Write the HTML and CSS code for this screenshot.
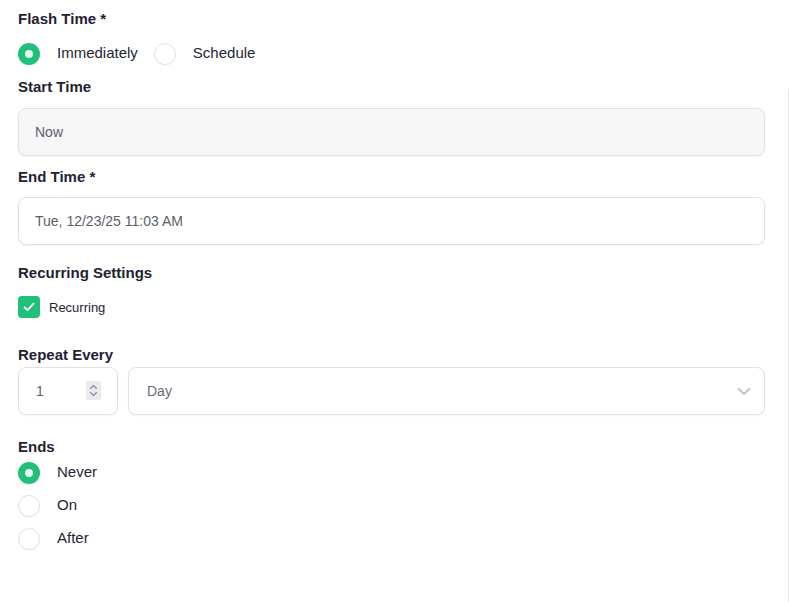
FILE: index.html
```html
<!DOCTYPE html>
<html lang="en">
<head>
<meta charset="utf-8">
<title>Flash Time</title>
<link rel="stylesheet" href="styles.css">
</head>
<body>
<div class="page">
  <form class="form">
    <div class="label label-flash">Flash Time *</div>
    <div class="radio-row">
      <label class="radio-opt">
        <span class="radio checked"></span>
        <span class="radio-text">Immediately</span>
      </label>
      <label class="radio-opt">
        <span class="radio"></span>
        <span class="radio-text">Schedule</span>
      </label>
    </div>

    <div class="label label-start">Start Time</div>
    <div class="input input-disabled">Now</div>

    <div class="label label-end">End Time *</div>
    <div class="input input-end">Tue, 12/23/25 11:03 AM</div>

    <div class="label label-recurring">Recurring Settings</div>
    <label class="check-row">
      <span class="checkbox">
        <svg width="14" height="14" viewBox="0 0 14 14"><path d="M2.5 7.3 L5.6 10.2 L11.5 3.6" fill="none" stroke="#ffffff" stroke-width="1.8" stroke-linecap="round" stroke-linejoin="round"/></svg>
      </span>
      <span class="check-text">Recurring</span>
    </label>

    <div class="label label-repeat">Repeat Every</div>
    <div class="repeat-row">
      <div class="input number-input">
        <span>1</span>
        <span class="spinner">
          <svg width="15" height="19" viewBox="0 0 15 19">
            <path d="M4.5 7.5 L7.5 4.5 L10.5 7.5" fill="none" stroke="#8a8d96" stroke-width="1.1" stroke-linecap="round" stroke-linejoin="round"/>
            <path d="M4.5 11.5 L7.5 14.5 L10.5 11.5" fill="none" stroke="#8a8d96" stroke-width="1.1" stroke-linecap="round" stroke-linejoin="round"/>
          </svg>
        </span>
      </div>
      <div class="input select-input">
        <span>Day</span>
        <svg class="chevron" width="14" height="9" viewBox="0 0 14 9"><path d="M1.5 1.8 L7 7 L12.5 1.8" fill="none" stroke="#c4c4c8" stroke-width="2" stroke-linecap="round" stroke-linejoin="round"/></svg>
      </div>
    </div>

    <div class="label label-ends">Ends</div>
    <div class="radio-col">
      <label class="radio-opt">
        <span class="radio checked"></span>
        <span class="radio-text">Never</span>
      </label>
      <label class="radio-opt">
        <span class="radio"></span>
        <span class="radio-text">On</span>
      </label>
      <label class="radio-opt">
        <span class="radio"></span>
        <span class="radio-text">After</span>
      </label>
    </div>
  </form>
  <div class="side"></div>
</div>
</body>
</html>
```

FILE: styles.css
```css
* {
  box-sizing: border-box;
}

html, body {
  margin: 0;
  padding: 0;
  background: #ffffff;
}

body {
  font-family: "Liberation Sans", Arial, Helvetica, sans-serif;
  color: #1f2233;
}

.page {
  display: flex;
  width: 789px;
  min-height: 602px;
}

.form {
  width: 788px;
  padding: 9px 23px 0 18px;
  display: flex;
  flex-direction: column;
}

.side {
  width: 1px;
  margin-top: 89px;
  background: #e6e6ea;
}

.label {
  font-size: 15px;
  font-weight: bold;
  line-height: 20px;
  color: #1f2233;
}

.label-flash { margin-bottom: 14px; }
.label-start { margin-top: 12px; margin-bottom: 11px; }
.label-end { margin-top: 11px; margin-bottom: 10px; }
.label-recurring { margin-top: 18px; margin-bottom: 13px; }
.label-repeat { margin-top: 27px; margin-bottom: 2px; }
.label-ends { margin-top: 22px; margin-bottom: 5px; }

.radio-row {
  display: flex;
  gap: 16px;
}

.radio-col {
  display: flex;
  flex-direction: column;
  gap: 11px;
}

.radio-opt {
  display: flex;
  align-items: center;
  height: 22px;
}

.radio {
  width: 22px;
  height: 22px;
  border-radius: 50%;
  border: 1px solid #e2e2ea;
  background: #ffffff;
  box-shadow: 0 1px 1px rgba(0, 0, 0, 0.04);
  flex: none;
}

.radio.checked {
  border: 7px solid #20c07a;
  background: #e9fbf0;
}

.radio-text {
  margin-left: 17px;
  font-size: 15px;
  line-height: 20px;
  color: #232636;
  position: relative;
  top: -1px;
}

.input {
  height: 48px;
  border: 1px solid #e0e0ea;
  border-radius: 8px;
  background: #ffffff;
  box-shadow: 0 1px 2px rgba(0, 0, 0, 0.05);
  display: flex;
  align-items: center;
  padding: 0 16px;
  font-size: 14px;
  line-height: 18px;
  padding-bottom: 1px;
  color: #5a5e6c;
}

.input-disabled {
  background: #f7f7f8;
}

.check-row {
  display: flex;
  align-items: center;
  height: 22px;
}

.checkbox {
  width: 22px;
  height: 22px;
  border-radius: 4px;
  background: #20c07a;
  display: flex;
  align-items: center;
  justify-content: center;
  flex: none;
}

.check-text {
  margin-left: 9px;
  font-size: 13px;
  color: #232636;
}

.repeat-row {
  display: flex;
  gap: 10px;
}

.number-input {
  width: 100px;
  padding: 0 16px 1px 17px;
  justify-content: space-between;
  color: #5a5e6c;
}

.spinner {
  width: 15px;
  height: 19px;
  background: #e9e9ee;
  display: flex;
}

.select-input {
  flex: 1;
  padding: 0 13px 1px 18px;
  justify-content: space-between;
  color: #676b78;
}

.chevron {
  margin-top: 1px;
}
```
